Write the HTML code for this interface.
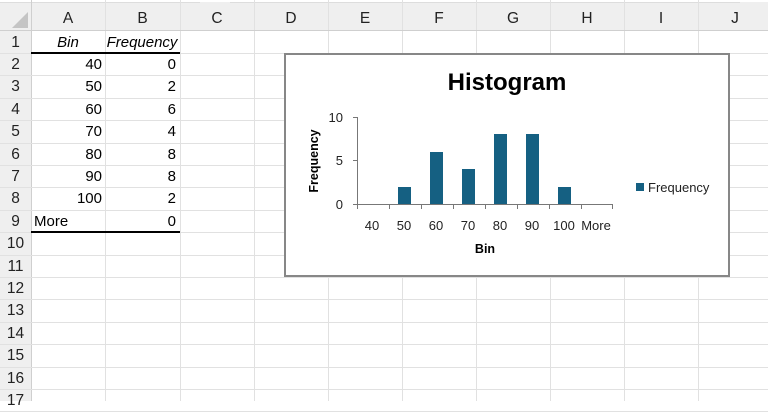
<!DOCTYPE html>
<html><head><style>
body{margin:0;width:768px;height:401px;overflow:hidden;background:#fff;font-family:"Liberation Sans",sans-serif;position:relative}
.a{position:absolute}
.hl{position:absolute;height:1px;background:#e1e1e1;left:0;width:768px}
.vl{position:absolute;width:1px;background:#e1e1e1;top:0;height:401px}
.ch{position:absolute;top:10px;height:20px;font-size:15.5px;color:#222;text-align:center}
.rh{position:absolute;left:0;width:31px;text-align:center;font-size:15.5px;color:#222}
.c{position:absolute;font-size:15px;color:#000}
</style></head><body>
<div class="a" style="left:0;top:2px;width:768px;height:29px;background:#efefef"></div>
<div class="a" style="left:0;top:31px;width:31px;height:370px;background:#efefef"></div>
<div class="a" style="left:0;top:0;width:200px;height:2px;background:#fff;border-bottom:1px solid #ddd"></div>
<div class="a" style="left:230px;top:0;width:510px;height:2px;background:#fff;border-bottom:1px solid #ddd"></div>
<svg class="a" style="left:12px;top:12px" width="17" height="17"><polygon points="16,0 16,16 0,16" fill="#c4c4c4"/></svg>
<div id="g"></div>
<div class="a" style="left:31px;top:52px;width:149px;height:2px;background:#000"></div>
<div class="a" style="left:31px;top:231px;width:149px;height:2px;background:#000"></div>
<div class="c" style="left:31px;top:34px;width:74px;text-align:center;font-style:italic">Bin</div>
<div class="c" style="left:105px;top:34px;width:74px;text-align:center;font-style:italic">Frequency</div>
<svg class="a" style="left:284px;top:53px" width="446" height="224">
<rect x="1" y="1" width="444" height="222" fill="#fff" stroke="#878787" stroke-width="2"/>
<text x="223" y="37" text-anchor="middle" font-family="Liberation Sans" font-weight="bold" font-size="24" fill="#000">Histogram</text>
<g font-family="Liberation Sans" font-size="13" fill="#222">
<text x="59" y="69" text-anchor="end">10</text>
<text x="59" y="112" text-anchor="end">5</text>
<text x="59" y="156" text-anchor="end">0</text>
<text x="88" y="177" text-anchor="middle">40</text>
<text x="120" y="177" text-anchor="middle">50</text>
<text x="152" y="177" text-anchor="middle">60</text>
<text x="184" y="177" text-anchor="middle">70</text>
<text x="216" y="177" text-anchor="middle">80</text>
<text x="248" y="177" text-anchor="middle">90</text>
<text x="280" y="177" text-anchor="middle">100</text>
<text x="312" y="177" text-anchor="middle">More</text>
<text x="364" y="139">Frequency</text>
</g>
<text x="201" y="200" text-anchor="middle" font-family="Liberation Sans" font-weight="bold" font-size="12.5" fill="#000">Bin</text>
<text transform="translate(34,108) rotate(-90)" text-anchor="middle" font-family="Liberation Sans" font-weight="bold" font-size="12.5" fill="#000">Frequency</text>
<rect x="352" y="130" width="8" height="8" fill="#156082"/>
<g stroke="#777" stroke-width="1"><line x1="73.5" y1="64" x2="73.5" y2="151"/><line x1="69" y1="64.5" x2="73" y2="64.5"/><line x1="69" y1="107.5" x2="73" y2="107.5"/><line x1="69" y1="151.5" x2="328" y2="151.5"/>
<line x1="73.5" y1="151" x2="73.5" y2="156"/><line x1="105.5" y1="151" x2="105.5" y2="156"/><line x1="137.5" y1="151" x2="137.5" y2="156"/><line x1="169.5" y1="151" x2="169.5" y2="156"/><line x1="201.5" y1="151" x2="201.5" y2="156"/><line x1="233.5" y1="151" x2="233.5" y2="156"/><line x1="265.5" y1="151" x2="265.5" y2="156"/><line x1="297.5" y1="151" x2="297.5" y2="156"/><line x1="328.5" y1="151" x2="328.5" y2="156"/></g>
<g fill="#156082">
<rect x="114" y="134" width="13" height="17"/>
<rect x="146" y="99" width="13" height="52"/>
<rect x="178" y="116" width="13" height="35"/>
<rect x="210" y="81" width="13" height="70"/>
<rect x="242" y="81" width="13" height="70"/>
<rect x="274" y="134" width="13" height="17"/>
</g>
</svg>
<script>
var g=document.getElementById('g'),h='';
var cols=[31,105,180,254,328,402,476,550,624,698,772];
var L='ABCDEFGHIJ';
for(var i=0;i<cols.length;i++){h+='<div class="vl" style="left:'+cols[i]+'px;'+(i==0?'background:#cfcfcf;':'')+'"></div>';}
for(var i=0;i<10;i++){h+='<div class="ch" style="left:'+cols[i]+'px;width:'+(cols[i+1]-cols[i])+'px">'+L[i]+'</div>';}
h+='<div class="hl" style="top:30px;background:#cfcfcf"></div>';
for(var r=1;r<=17;r++){var t=30.6+(r-1)*22.4;h+='<div class="hl" style="top:'+Math.round(t+22.4)+'px"></div><div class="rh" style="top:'+Math.round(t+3)+'px">'+r+'</div>';}
var d=[[40,0],[50,2],[60,6],[70,4],[80,8],[90,8],[100,2]];
for(var k=0;k<d.length;k++){var t=Math.round(30.6+(k+1)*22.4+3);h+='<div class="c" style="left:31px;width:71px;text-align:right;top:'+t+'px">'+d[k][0]+'</div><div class="c" style="left:105px;width:71px;text-align:right;top:'+t+'px">'+d[k][1]+'</div>';}
var t=Math.round(30.6+8*22.4+3);h+='<div class="c" style="left:34px;top:'+t+'px">More</div><div class="c" style="left:105px;width:71px;text-align:right;top:'+t+'px">0</div>';
g.innerHTML=h;
</script>
</body></html>
